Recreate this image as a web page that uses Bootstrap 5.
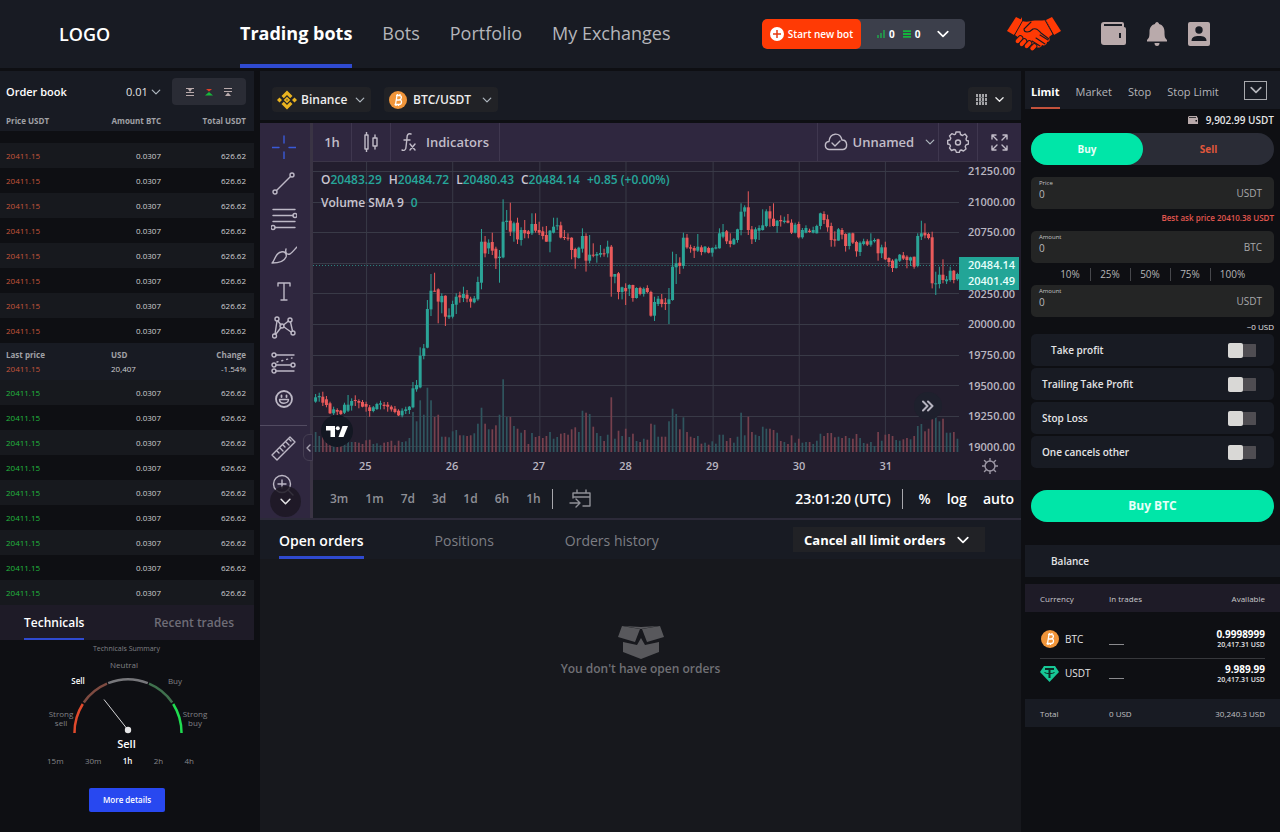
<!DOCTYPE html>
<html lang="en" data-bs-theme="dark">
<head>
<meta charset="utf-8">
<meta name="viewport" content="width=device-width, initial-scale=1">
<title>Trading bots</title>
<link href="https://cdn.jsdelivr.net/npm/bootstrap@5.3.0/dist/css/bootstrap.min.css" rel="stylesheet">
<style>
:root{--bar:#181b23;--page:#0e0f13;--chip:#212226;--violet:#2f273f;--line-v:#3f374f;--plot:#231e2e;--blue:#2f4ad0;--up:#26a69a;--mint:#00e6a8}
body{font-family:"Open Sans","Noto Sans",sans-serif;background:var(--page);color:#e4e4e6;font-size:11px;line-height:16px}
button{font:inherit;color:inherit}
a{color:inherit;text-decoration:none}
svg{display:block;flex:none}
.ic{fill:none;stroke:currentColor;stroke-width:1.4;stroke-linecap:round;stroke-linejoin:round}
.fw-semi{font-weight:600}
.plain{background:none;border:0;padding:0}
.shrinkable{min-width:0}

/* header */
.topbar{background:var(--bar);height:68px;margin-bottom:3px;padding-left:59px;padding-right:70px}
.brand{font-size:18px;font-weight:600;width:181px;color:#fff}
.mainnav{gap:30px;font-size:18px;color:#b4b5ba}
.mainnav a{display:flex;align-items:center;border-bottom:4px solid transparent;padding-top:2px}
.mainnav a.active{color:#fff;font-weight:700;border-color:var(--blue)}
.botbar{background:#3c3f4b;border-radius:5px;height:30px;overflow:hidden;width:203px}
.botbar .start{background:#ff3a05;color:#fff;font-size:10px;font-weight:600;border-radius:5px;width:99px;height:30px}
.counts{font-size:10px}
.tint{color:#b9aaab}
.hands{margin-left:42px;margin-right:40px}
.hicon{margin-left:21px}

/* page frame */
.frame{display:grid;grid-template-columns:254px minmax(0,1fr) 255px;min-height:761px}
.mid{background:#17181d;margin:0 4px 0 6px}

/* drop-downs */
.pick{width:auto;border:0;padding:0 20px 0 0;background-color:transparent;color:inherit;font:inherit;background-size:10px 10px;background-position:right 6px center;
--bs-form-select-bg-img:url("data:image/svg+xml,%3csvg xmlns='http://www.w3.org/2000/svg' viewBox='0 0 10 10'%3e%3cpath fill='none' stroke='%23ccc' stroke-width='1.4' d='M1 3l4 4 4-4'/%3e%3c/svg%3e")}
.pick option{color:#fff}
.pick-step{background-position:right 2px center;padding-right:15px;margin-right:9px}
.pick-ex{margin-left:4px;padding-right:23px}
.pick-pair{margin-left:6px;padding-right:26px}
.pick-name{margin-left:5px;padding-right:20px;flex:1;background-position:right 0 center}

/* order book */
.ob-head{background:var(--bar);height:60px}
.ob-title{height:41px;padding:0 8px 0 6px}
.ob-title h2{font-size:11px}
.modes{background:#2a2c35;border-radius:4px;height:27px;width:74px}
.book{width:100%;table-layout:fixed;font-size:8px;line-height:12px;border-collapse:collapse}
.book th{font-weight:700;color:#a0a1a6;padding:0;height:17px}
.book td{padding:0;height:25px;color:#cfcfd2}
.book .c1{width:110px}.book .c2{width:51px}
.book tr>:first-child{padding-left:6px}
.book tr>:last-child{padding-right:8px;text-align:right}
.book tr>:nth-child(2){text-align:right}
.book tbody tr:nth-child(odd){background:#17191e}
.asks{margin-top:12px}
.asks td:first-child,.last .red{color:#c5553b}
.bids td:first-child{color:#22b83f}
.last{background:var(--bar);height:37px;padding-top:5px}
.last .book td,.last .book th{height:14px}
.last .book tr>:nth-child(2){text-align:left;padding-left:1px}
.last .book tbody tr{background:none}
.tabs2{background:#1e1b27;height:35px;font-size:12px;font-weight:600;padding:0 20px 0 24px;color:#6f6d77}
.tabs2 button{border-bottom:2px solid transparent;padding-top:3px}
.tabs2 .active{color:#fff;border-color:var(--blue)}
.frames{font-size:8px;color:#85868a;margin:1px 60px 19px 47px}
.more{background:#2848f0;color:#fff;font-size:8px;font-weight:600;border:0;border-radius:2px;width:76px;height:24px}

/* chart */
.pairwrap{background:var(--page);padding-bottom:3px}
.pairbar{background:var(--bar);height:49px;padding:8px 9px 0 12px;gap:13px}
.chip{background:var(--chip);border-radius:4px;height:25px;color:#eee;font-size:12px}
.chip-l{padding-left:5px}
.chip-grid{width:44px}
.widget{background:var(--plot)}
.tools{width:50px;background:var(--violet);color:#bdb8c6;padding:6px 3px 0 0}
.tools button{height:36px;display:flex;align-items:center;justify-content:center}
.tools .cross{color:#3a5ad8}
.scroller{left:10px;bottom:1px;width:31px;height:31px;background:#1c1823d9}
.collapser{left:43px;bottom:57px;width:10px;height:27px;border:1px solid #453e52;background:var(--violet);color:#aaa5b3}
.rule{background:#3a3444;width:3px}
.c-head{background:var(--violet);height:39px;border-bottom:1px solid #3b3547;color:#c1bcc8;font-size:13px;font-weight:600}
.c-cell{border-right:1px solid var(--line-v);width:39px;display:flex;align-items:center;justify-content:center}
.c-ind{width:109px;gap:9px}
.c-name{width:122px;padding:0 6px 0 8px;border-left:1px solid var(--line-v)}
.c-full{width:43px;border:0}
.legend-line{font-size:12px;left:8px;top:10px;gap:7px;color:var(--up)}
.legend-vol{top:33px}
.legend-line b{font-weight:600;color:#c9c5d0}
.axis{font-size:11px;font-weight:600;color:#b9b5c0}
.axis-y{width:62px;height:294px;line-height:18px;padding-left:9px}
.axis-x{height:23px;padding:0 30px 0 9px;line-height:18px}
.tag{left:0;right:2px;top:95px;background:#22a597;color:#e7fffb;padding-left:9px;line-height:16px;height:33px}
.sun{color:#9a95a3;margin-top:2px}
.tvmark{left:8px;bottom:33px}
.latest{right:79px;bottom:60px;width:28px;height:28px;background:#1e202d;color:#b5b3bf}
.c-foot{background:var(--bar);height:38px;font-size:12px;font-weight:600;color:#8f9097;padding:0 7px 0 17px}
.spans{gap:17px}
.bar-v{width:1px;height:20px;background:#a8a8ad;margin:0 16px 0 11px}
.clock{font-size:14px}
.scales{gap:16px;font-size:14px}
.tabs3{background:var(--bar);height:41px;border-top:2px solid #2c2a39;font-size:14px;color:#7d7e84;padding:0 36px 0 19px;gap:71px}
.tabs3>button{border-bottom:3px solid transparent;padding-top:5px}
.tabs3 .active{color:#fff;font-weight:600;border-color:var(--blue)}
.tabs3 .cancel{background:var(--chip);width:192px;height:25px;color:#fff;font-weight:700;font-size:13px;border:0;padding:0 16px 0 11px;margin-top:7px}
.empty{padding-top:66px;color:#707075;font-size:12px;gap:2px}

/* order form */
.sidetabs{background:var(--bar);height:38px;padding:0 13px 0 6px;color:#b4b5ba;gap:16px}
.sidetabs .tb{border-bottom:2px solid transparent;height:38px;padding-top:6px}
.sidetabs .active{color:#fff;font-weight:700;border-color:#c4523c}
.box-dd{width:23px;height:19px;border:1px solid #a8a9ad}
.oform{padding:0 6px}
.funds{height:22px;margin-bottom:2px;font-size:10px}
.bs{background:#2a2c36;border-radius:16px;height:32px;font-weight:700;font-size:10px;margin-bottom:12px}
.bs button{height:32px;border-radius:16px}
.bs .buy{background:var(--mint);color:#e8fff8;width:112px}
.bs .sell{color:#e0573b}
.field{background:#242525;border-radius:5px;height:32px;padding:0 12px 0 8px;color:#a9a9ab;font-size:10px}
.field>div{padding-top:3px}
.field label{font-size:6px;line-height:7px;display:block;color:#c4c4c6}
.field input{background:none;border:0;outline:0;padding:0;color:#b9b9bb;width:100%;font-size:10px;line-height:12px;height:13px;display:block}
.note{font-size:8px;line-height:12px}
.note-ask{color:#e0564f;padding:3px 0;height:22px}
.note-sum{padding-top:4px;height:17px}
.pcts{height:22px;color:#b5b5b7;font-size:10px}
.pcts button{border-right:1px solid #47484c;width:40px;height:13px;line-height:13px}
.pcts button:last-child{border:0;width:44px}
.opt{background:var(--bar);height:32px;border-radius:5px;padding:0 18px 0 11px;margin-bottom:2px;font-weight:600;font-size:10px}
.opt-in{padding-left:9px}
.tgl{appearance:none;margin:0;width:28px;height:15px;position:relative;background:linear-gradient(#4f4d52,#4f4d52) center/28px 13px no-repeat;border-radius:2px}
.tgl::before{content:"";position:absolute;left:0;top:0;width:15px;height:15px;background:#d9d8d6;border-radius:2px}
.tgl:checked::before{left:13px}
.buybtn{background:var(--mint);color:#e8fff8;font-weight:700;font-size:12px;height:32px;border-radius:16px;margin-top:20px}
.bal-head{background:var(--bar);height:32px;padding-left:26px;margin:23px 0 7px;font-weight:600;font-size:10px}
.bal{width:100%;table-layout:fixed;font-size:8px;line-height:11px}
.bal th{background:#1e1b27;height:28px;font-weight:400;color:#c9c9cd}
.bal tfoot td{background:var(--bar);height:28px;color:#c0c0c4}
.bal .w1{width:83px}.bal .w2{width:56px}
.bal tr>:first-child{padding-left:15px}
.bal tr>:last-child{padding-right:15px;text-align:right}
.row-a{height:46px}.row-a td{padding-top:9px}
.row-b{height:41px;background:linear-gradient(#37383c,#37383c) 15px 0/225px 1px no-repeat}
.row-b td{padding-bottom:11px}
.coin{font-size:10px;gap:6px}
.coin svg{width:19px}
.amt{font-size:10px;font-weight:700;color:#fff;line-height:12px}
.sub{font-size:7px;font-weight:600;line-height:10px}
.dash{width:15px;height:1px;background:#8a8a8e;margin-top:10px}
</style>
</head>
<body>
<header class="topbar d-flex align-items-stretch">
  <a href="#" class="brand d-flex align-items-center">LOGO</a>
  <nav class="mainnav d-flex">
    <a href="#" class="active">Trading bots</a><a href="#">Bots</a><a href="#">Portfolio</a><a href="#">My Exchanges</a>
  </nav>
  <div class="d-flex align-items-center ms-auto">
    <div class="botbar d-flex align-items-center">
      <button class="start plain d-flex align-items-center justify-content-center gap-1">
        <svg width="14" height="14" viewBox="0 0 14 14"><circle cx="7" cy="7" r="7" fill="#fff"/><path d="M7 3v8M3 7h8" stroke="#e63a10" stroke-width="1.5"/></svg>
        <span>Start new bot</span>
      </button>
      <div class="counts d-flex align-items-center ms-3 flex-grow-1 fw-bold text-white">
        <svg width="8" height="8" viewBox="0 0 8 8" stroke="#1db14c" stroke-width="1.4"><path d="M1 8V5M4 8V3M7 8V0"/></svg>
        <span class="ms-1">0</span>
        <svg class="ms-2" width="8" height="8" viewBox="0 0 8 8" stroke="#14b53c" stroke-width="1.8"><path d="M0 1.2h8M0 4h8M0 6.8h8"/></svg>
        <span class="ms-1">0</span>
        <button class="plain ms-auto me-3" aria-label="More"><svg class="ic" width="12" height="12" viewBox="0 0 10 10"><path d="M1 3l4 4 4-4"/></svg></button>
      </div>
    </div>
    <svg class="hands" width="54" height="36" viewBox="0 0 54 36">
      <g fill="#ff3a05"><path d="M9 1l6 3-8 15-7-4z"/><path d="M45 1l-6 3 8 15 7-4z"/>
      <path d="M15 5c3 1 6 1 9 0 5-1 10 0 15-1l7 14-4 3c2 3 0 5-2 5 0 3-3 4-5 3-1 3-4 3-6 2-1 2-5 3-7-1l-14-11-1-3 8-15z"/></g>
      <path d="M16 4L7 20M38 4l9 16" stroke="#181b23" stroke-width="1"/>
      <path d="M24 6l-7 7c0 4 5 4 9 0 4-1 5 1 8 4l8 6M29 22l9 6M25 25l8 5M33 19l8 5" fill="none" stroke="#181b23" stroke-width="1.1" stroke-linecap="round"/>
      <g stroke="#181b23" stroke-width="1" fill="#ff3a05"><rect x="10" y="19" width="5" height="9" rx="2.5" transform="rotate(42 12 23)"/><rect x="14" y="22" width="5" height="9" rx="2.5" transform="rotate(42 16 26)"/><rect x="19" y="24" width="5" height="9" rx="2.5" transform="rotate(42 21 28)"/><rect x="24" y="27" width="5" height="8" rx="2.5" transform="rotate(42 26 31)"/></g>
    </svg>
    <button class="plain tint" aria-label="Wallet"><svg width="25" height="24" viewBox="0 0 25 24"><path fill="currentColor" fill-rule="evenodd" d="M3 0h18a2 2 0 0 1 2 2v3a2 2 0 0 1 2 2v14a2 2 0 0 1-2 2H3a3 3 0 0 1-3-3V3a3 3 0 0 1 3-3zM3 2v2h18V2zM18 11v5h2v-5z"/></svg></button>
    <button class="plain tint hicon" aria-label="Notifications"><svg width="20" height="24" viewBox="0 0 20 24"><path fill="currentColor" d="M10 0c1 0 2 1 2 2 4 1 5.500 4 5.500 8 0 5 .5 6 2.500 8v1.500H0V18c2-2 2.500-3 2.500-8 0-4 1.500-7 5.500-8 0-1 1-2 2-2zM7.500 21h5a2.500 3 0 0 1-5 0z"/></svg></button>
    <button class="plain tint hicon" aria-label="Account"><svg width="22" height="24" viewBox="0 0 22 24"><rect width="22" height="24" rx="2" fill="currentColor"/><circle cx="11" cy="8" r="3.700" fill="#181b23"/><path d="M3.500 19c0-4 3-5 7.500-5s7.500 1 7.500 5z" fill="#181b23"/></svg></button>
  </div>
</header>

<main class="frame">
  <!-- order book and technicals -->
  <section>
    <div class="ob-head">
      <div class="ob-title d-flex align-items-center">
        <h2 class="m-0 fw-semi text-white">Order book</h2>
        <select class="form-select pick pick-step ms-auto" aria-label="Precision"><option>0.01</option></select>
        <div class="modes d-flex align-items-center justify-content-around px-2">
          <button class="plain" aria-label="Both"><svg width="8" height="8" viewBox="0 0 8 8"><path d="M0 .5h8M0 4.500h8M0 7.500h8" stroke="#b9aaab"/><path d="M2 1h4L4 4z" fill="#b9aaab"/></svg></button>
          <button class="plain" aria-label="Split"><svg width="8" height="8" viewBox="0 0 8 8"><path d="M1 1h6L4 3.500z" fill="#e0402a"/><path d="M0 7.500h8L4 4z" fill="#17b83c"/></svg></button>
          <button class="plain" aria-label="Bids"><svg width="8" height="8" viewBox="0 0 8 8"><path d="M0 .5h8M0 3.500h8" stroke="#b9aaab"/><path d="M1 8h6L4 4.500z" fill="#b9aaab"/></svg></button>
        </div>
      </div>
      <table class="book"><colgroup><col class="c1"><col class="c2"><col></colgroup>
        <thead><tr><th>Price USDT</th><th>Amount BTC</th><th>Total USDT</th></tr></thead></table>
    </div>
    <table class="book asks"><colgroup><col class="c1"><col class="c2"><col></colgroup><tbody id="asks"></tbody></table>
    <div class="last"><table class="book"><colgroup><col class="c1"><col class="c2"><col></colgroup>
      <thead><tr><th>Last price</th><th>USD</th><th>Change</th></tr></thead>
      <tbody><tr><td class="red">20411.15</td><td>20,407</td><td>-1.54%</td></tr></tbody></table></div>
    <table class="book bids"><colgroup><col class="c1"><col class="c2"><col></colgroup><tbody id="bids"></tbody></table>
    <div class="tabs2 d-flex justify-content-between align-items-stretch">
      <button class="plain active">Technicals</button><button class="plain">Recent trades</button>
    </div>
    <svg width="100%" height="112" viewBox="0 0 254 112" font-size="8" fill="#808185" text-anchor="middle">
      <text x="126.500" y="11" font-size="7">Technicals Summary</text>
      <text x="124" y="28">Neutral</text><text x="78" y="44" fill="#fff" font-weight="600">Sell</text><text x="175" y="44">Buy</text>
      <text x="61" y="77">Strong</text><text x="61" y="86">sell</text><text x="195" y="77">Strong</text><text x="195" y="86">buy</text>
      <g fill="none" stroke-width="2.500"><path d="M74.500 93A53.500 53.500 0 0 1 82.800 64" stroke="#e04a2c"/><path d="M83.800 62.500A53.500 53.500 0 0 1 107 43.700" stroke="#7e4b41"/><path d="M108.200 43.200A53.500 53.500 0 0 1 147.800 43.200" stroke="#77777b"/><path d="M149 43.700A53.500 53.500 0 0 1 172.200 62.500" stroke="#40714e"/><path d="M173.200 64A53.500 53.500 0 0 1 181.500 93" stroke="#20dc50"/></g>
      <path d="M104 59.500L128 90" stroke="#d5d5d7"/><circle cx="128" cy="90" r="3.200" fill="#e6e6e8"/>
      <text x="126.500" y="108" fill="#fff" font-weight="600" font-size="11">Sell</text>
    </svg>
    <div class="frames d-flex justify-content-between"><button class="plain">15m</button><button class="plain">30m</button><button class="plain text-white fw-semi">1h</button><button class="plain">2h</button><button class="plain">4h</button></div>
    <div class="text-center"><button class="more">More details</button></div>
  </section>

  <!-- chart and orders -->
  <section class="mid">
    <div class="pairwrap">
    <div class="pairbar d-flex align-items-center">
      <div class="chip chip-l d-flex align-items-center fw-semi"><svg width="20" height="20" viewBox="0 0 20 20" fill="#e9b320"><path d="M10 .5l5.500 5.500-2.300 2.300L10 5 6.800 8.300 4.500 6zM10 19.500l5.500-5.500-2.300-2.300L10 15l-3.200-3.300L4.500 14zM2.500 7.500L5 10l-2.500 2.500L0 10zM17.500 7.500L20 10l-2.500 2.500L15 10z"/><path fill-rule="evenodd" d="M10 6.700l3.300 3.300-3.300 3.300L6.700 10zM10 9.200l-.8.8.8.8.8-.8z"/></svg>
        <select class="form-select pick pick-ex" aria-label="Exchange"><option>Binance</option></select></div>
      <div class="chip chip-l d-flex align-items-center fw-semi"><svg width="18" height="18" viewBox="0 0 18 18"><circle cx="9" cy="9" r="9" fill="#f0953a"/><path d="M7 4.500h3.500c2.500 0 2.500 3.800 0 4.200 3 .3 2.500 4.800-.5 4.800H5.500M8 4.500l-1.500 9M7 9h3.500M8.500 3v2M11 3v2M7 13v2M9.500 13v2" fill="none" stroke="#fff" stroke-width="1.300"/></svg>
        <select class="form-select pick pick-pair" aria-label="Pair"><option>BTC/USDT</option></select></div>
      <button class="chip chip-grid border-0 p-0 ms-auto d-flex align-items-center justify-content-center gap-2" aria-label="Layout"><svg width="11" height="11" viewBox="0 0 11 11"><path d="M0 0h2v11H0zM3 0h5v11H3zM9 0h2v11H9z" fill="#a5a5a8"/><path d="M0 3.500h2M0 7.500h2M9 3.500h2M9 7.500h2M5.500 0v11" stroke="#303136"/><path d="M3 3.500h5M3 7.500h5" stroke="#77787c"/></svg><svg class="ic" width="9" height="9" viewBox="0 0 10 10"><path d="M1 3l4 4 4-4"/></svg></button>
    </div>
    </div>
    <div class="widget d-flex position-relative">
      <div class="tools d-flex flex-column">
        <button class="plain cross" aria-label="Cross"><svg class="ic" width="24" height="24" viewBox="0 0 24 24"><path d="M12 1v7M12 17v7M0 12.500h7M17 12.500h7"/></svg></button>
        <button class="plain" aria-label="Trend line"><svg class="ic" width="24" height="24" viewBox="0 0 24 24"><circle cx="3" cy="21" r="2"/><circle cx="20" cy="4" r="2"/><path d="M4.500 19.500L18.500 5.500"/></svg></button>
        <button class="plain" aria-label="Fibonacci"><svg class="ic" width="26" height="24" viewBox="0 0 26 24"><path d="M2 2.500h22M2 8.500h20M2 14.500h22M4 20.500h20"/><circle cx="24" cy="8.500" r="2"/><circle cx="2" cy="20.500" r="2"/></svg></button>
        <button class="plain" aria-label="Brush"><svg class="ic" width="26" height="24" viewBox="0 0 26 24"><path d="M1 20c3-2 3-10 9-11 4-1 6 2 5 5-2 5-8 6-14 6zM15 6c-1 4 1 6 4 5 3-2 4-4 7-7"/></svg></button>
        <button class="plain" aria-label="Text"><svg class="ic" width="24" height="24" viewBox="0 0 24 24"><path d="M6 7V4h12v3M12 4v17M9 21h6"/></svg></button>
        <button class="plain" aria-label="Pattern"><svg class="ic" width="24" height="24" viewBox="0 0 24 24"><circle cx="5" cy="4" r="2"/><circle cx="18" cy="5" r="2"/><circle cx="10" cy="11" r="2"/><circle cx="2.500" cy="21" r="2"/><circle cx="21" cy="18" r="2"/><path d="M5 6L3 19M6 6l3 4M11.500 10l5-4M18.500 7l2 9M12 12l7 5M9 12.500L4 19"/></svg></button>
        <button class="plain" aria-label="Forecast"><svg class="ic" width="26" height="24" viewBox="0 0 26 24"><circle cx="3" cy="4" r="2"/><circle cx="3" cy="14" r="2"/><circle cx="3" cy="20" r="2"/><circle cx="22" cy="14" r="2"/><path d="M5 4h18M5 14h15M5 20h18"/><path d="M6 11L21 7" stroke-dasharray="1 4"/></svg></button>
        <button class="plain" aria-label="Emoji"><svg class="ic" width="20" height="20" viewBox="0 0 20 20"><circle cx="10" cy="10" r="8" stroke-width="1.800"/><path d="M5.500 10.500c0 5 9 5 9 0z"/><path d="M7.500 6.500v1.500M12.500 6.500v1.500" stroke-width="1.800"/></svg></button>
        <hr class="m-0 mt-2 mb-1">
        <button class="plain" aria-label="Measure"><svg class="ic" width="26" height="26" viewBox="0 0 26 26"><path d="M1 20L19 2l5 5L6 25zM6 16l2 2M9 13l3 3M12 10l2 2M15 7l3 3M18 4l2 2"/></svg></button>
        <button class="plain" aria-label="Zoom"><svg class="ic" width="24" height="24" viewBox="0 0 24 24"><circle cx="10" cy="12" r="8.500"/><path d="M10 8v8M6 12h8M16 18l5 5"/></svg></button>
      </div>
      <button class="plain scroller position-absolute rounded-circle d-flex justify-content-center align-items-center" aria-label="Scroll tools"><svg class="ic" width="11" height="11" viewBox="0 0 10 10"><path d="M1 3l4 4 4-4"/></svg></button>
      <button class="collapser position-absolute d-flex justify-content-center align-items-center rounded-start p-0" aria-label="Collapse"><svg class="ic" width="5" height="8" viewBox="0 0 5 8"><path d="M4 1L1 4l3 3"/></svg></button>
      <div class="rule"></div>
      <div class="flex-grow-1 shrinkable">
        <div class="c-head d-flex align-items-stretch">
          <button class="plain c-cell">1h</button>
          <button class="plain c-cell" aria-label="Candles"><svg class="ic" width="16" height="20" viewBox="0 0 16 20"><path d="M2 3h3v14H2zM3.500 0v3M3.500 17v3M10 6h4v8h-4zM12 3v3M12 14v3"/></svg></button>
          <button class="plain c-cell c-ind"><svg class="ic" width="16" height="18" viewBox="0 0 16 18"><path d="M10 1C7 0 6 2 6 5l-1 9c0 3-2 4-4 3M3 7h6M9 11l5 6M14 11l-5 6"/></svg>Indicators</button>
          <div class="c-cell c-name ms-auto"><svg class="ic" width="24" height="18" viewBox="0 0 24 18"><path d="M6 16.500C0 17 0 9 5 8.500 6-1 16-1 18 7c6 0 6 9 1 9.500zM8 10l3 3 5-5"/></svg>
            <select class="form-select pick pick-name" aria-label="Layout name"><option>Unnamed</option></select></div>
          <button class="plain c-cell" aria-label="Settings"><svg class="ic" width="22" height="22" viewBox="0 0 22 22"><path d="M9 1h4l.5 2.500 2 1L18 3l2 2.500-1 2.500.5 1.500 2 .5v3l-2.500.8-.8 1.700L19 18l-2.500 2-2.300-1-1.200.5-.7 2H9.500L8.500 19l-1.500-.5-2.500 1L2.500 17l1-2-.8-1.500-2-.5v-3.500L3 9l.8-1.800L2.500 5l2.300-2.300L7.200 3.700l1.300-.5z"/><circle cx="11" cy="11.500" r="2.500"/></svg></button>
          <button class="plain c-cell c-full" aria-label="Fullscreen"><svg class="ic" width="17" height="17" viewBox="0 0 17 17"><path d="M1 5V1h4M1 1l5 5M12 1h4v4M16 1l-5 5M1 12v4h4M1 16l5-5M16 12v4h-4M16 16l-5-5"/></svg></button>
        </div>
        <div class="d-flex position-relative">
          <div class="flex-grow-1 shrinkable">
            <svg id="plot" width="100%" height="295" viewBox="0 0 645 295" preserveAspectRatio="none"></svg>
            <div class="axis axis-x d-flex text-center"><span class="flex-fill">25</span><span class="flex-fill">26</span><span class="flex-fill">27</span><span class="flex-fill">28</span><span class="flex-fill">29</span><span class="flex-fill">30</span><span class="flex-fill">31</span></div>
          </div>
          <div class="position-relative">
            <div class="axis axis-y d-flex flex-column justify-content-between"><span>21250.00</span><span>21000.00</span><span>20750.00</span><span>&nbsp;</span><span>20250.00</span><span>20000.00</span><span>19750.00</span><span>19500.00</span><span>19250.00</span><span>19000.00</span></div>
            <div class="axis tag position-absolute"><div>20484.14</div><div>20401.49</div></div>
            <svg class="ic sun mx-auto" width="16" height="16" viewBox="0 0 16 16"><circle cx="8" cy="8" r="5"/><path d="M8 0v3M8 13v3M0 8h3M13 8h3M2.500 2.500l2 2M11.500 11.500l2 2M13.500 2.500l-2 2M4.500 11.500l-2 2"/></svg>
          </div>
          <div class="legend-line position-absolute d-flex pe-none fw-semi"><span><b>O</b>20483.29</span><span><b>H</b>20484.72</span><span><b>L</b>20480.43</span><span><b>C</b>20484.14</span><span>+0.85 (+0.00%)</span></div>
          <div class="legend-line legend-vol position-absolute d-flex pe-none fw-semi"><b>Volume SMA 9</b><span>0</span></div>
          <svg class="tvmark position-absolute" width="32" height="32" viewBox="0 0 32 32"><circle cx="16" cy="16" r="16" fill="#131722"/><path d="M5 11h9v11h-4.500v-6.500H5z" fill="#fff"/><circle cx="16.800" cy="13.200" r="2" fill="#fff"/><path d="M21.500 11H27l-4.500 11h-5z" fill="#fff"/></svg>
          <button class="plain latest position-absolute rounded-circle d-flex align-items-center justify-content-center" aria-label="Latest"><svg class="ic" width="12" height="12" viewBox="0 0 12 12"><path stroke-width="2" d="M1 1.500L5.500 6 1 10.500M6 1.500L10.500 6 6 10.500"/></svg></button>
        </div>
        <div class="c-foot d-flex align-items-center">
          <div class="spans d-flex"><button class="plain">3m</button><button class="plain">1m</button><button class="plain">7d</button><button class="plain">3d</button><button class="plain">1d</button><button class="plain">6h</button><button class="plain">1h</button></div>
          <div class="bar-v"></div>
          <button class="plain" aria-label="Go to date"><svg class="ic" width="22" height="20" viewBox="0 0 22 20"><path d="M4 9V4h17v13h-7M8 1v3M17 1v3M4 8h17M1 14h9M7 10l4 4-4 4"/></svg></button>
          <span class="clock ms-auto text-white">23:01:20 (UTC)</span>
          <div class="bar-v"></div>
          <div class="scales d-flex text-white"><button class="plain">%</button><button class="plain">log</button><button class="plain">auto</button></div>
        </div>
      </div>
    </div>
    <div class="tabs3 d-flex align-items-stretch">
      <button class="plain active">Open orders</button><button class="plain">Positions</button><button class="plain">Orders history</button>
      <button class="cancel ms-auto d-flex align-items-center justify-content-between"><span>Cancel all limit orders</span><svg class="ic" width="12" height="12" viewBox="0 0 10 10"><path d="M1 3l4 4 4-4"/></svg></button>
    </div>
    <div class="empty d-flex flex-column align-items-center fw-semi">
      <svg width="46" height="34" viewBox="0 0 46 34" fill="#58585c"><path d="M5 17l14 3 4-7 4 7 14-3v10l-18 7-18-7z"/><path d="M4 1l18 3-5 13L0 12zM42 1L24 4l5 13 17-5z"/><path d="M6 1l17 3 17-3-17 1z"/></svg>
      <span>You don't have open orders</span>
    </div>
  </section>

  <!-- order form and balance -->
  <section>
    <div class="sidetabs d-flex align-items-stretch">
      <button class="plain tb active">Limit</button><button class="plain tb">Market</button><button class="plain tb">Stop</button><button class="plain tb">Stop Limit</button>
      <button class="box-dd bg-transparent p-0 ms-auto align-self-center d-flex align-items-center justify-content-center" aria-label="More order types"><svg class="ic" width="12" height="12" viewBox="0 0 10 10"><path d="M1 3l4 4 4-4"/></svg></button>
    </div>
    <div class="oform">
      <div class="funds d-flex justify-content-end align-items-center gap-2 fw-semi"><svg class="tint" width="10" height="8" viewBox="0 0 10 8"><path fill="currentColor" fill-rule="evenodd" d="M1 0h8v1.500h1V8H0V1zM1 1v.8h7V1zM7.500 4v1.500H9V4z"/></svg>9,902.99 USDT</div>
      <div class="bs d-flex"><button class="plain buy">Buy</button><button class="plain sell flex-grow-1">Sell</button></div>
      <div class="field d-flex align-items-center"><div class="flex-grow-1 align-self-start"><label for="price">Price</label><input id="price" value="0"></div><span>USDT</span></div>
      <div class="note note-ask text-end fw-semi">Best ask price 20410.38 USDT</div>
      <div class="field d-flex align-items-center"><div class="flex-grow-1 align-self-start"><label for="amt1">Amount</label><input id="amt1" value="0"></div><span>BTC</span></div>
      <div class="pcts d-flex align-items-center justify-content-center"><button class="plain">10%</button><button class="plain">25%</button><button class="plain">50%</button><button class="plain">75%</button><button class="plain">100%</button></div>
      <div class="field d-flex align-items-center"><div class="flex-grow-1 align-self-start"><label for="amt2">Amount</label><input id="amt2" value="0"></div><span>USDT</span></div>
      <div class="note note-sum text-end">~0 USD</div>
      <div class="opt d-flex align-items-center justify-content-between"><label for="t1" class="opt-in">Take profit</label><input class="tgl" type="checkbox" id="t1"></div>
      <div class="opt d-flex align-items-center justify-content-between"><label for="t2">Trailing Take Profit</label><input class="tgl" type="checkbox" id="t2"></div>
      <div class="opt d-flex align-items-center justify-content-between"><label for="t3">Stop Loss</label><input class="tgl" type="checkbox" id="t3"></div>
      <div class="opt d-flex align-items-center justify-content-between"><label for="t4">One cancels other</label><input class="tgl" type="checkbox" id="t4"></div>
      <button class="plain buybtn w-100">Buy BTC</button>
    </div>
    <div class="bal-head d-flex align-items-center">Balance</div>
    <table class="bal"><colgroup><col class="w1"><col class="w2"><col></colgroup>
      <thead><tr><th>Currency</th><th>In trades</th><th>Available</th></tr></thead>
      <tbody>
        <tr class="row-a"><td><div class="coin d-flex align-items-center"><svg width="19" height="18" viewBox="-1 0 19 18"><circle cx="9" cy="9" r="9" fill="#f0953a"/><path d="M7 4.500h3.500c2.500 0 2.500 3.800 0 4.200 3 .3 2.500 4.800-.5 4.800H5.500M8 4.500l-1.500 9M7 9h3.500M8.500 3v2M11 3v2M7 13v2M9.500 13v2" fill="none" stroke="#fff" stroke-width="1.300"/></svg>BTC</div></td><td><div class="dash"></div></td><td><div class="amt">0.9998999</div><div class="sub">20,417.31 USD</div></td></tr>
        <tr class="row-b"><td><div class="coin d-flex align-items-center"><svg width="19" height="16" viewBox="0 0 19 16"><path d="M4 0h11l4 6-9.500 10L0 6z" fill="#17c796"/><path d="M5 3h9M9.500 3v9" stroke="#0e2a24" stroke-width="2" fill="none"/><path d="M4.500 6.500c2 1.500 8 1.500 10 0" stroke="#0e2a24" fill="none"/></svg>USDT</div></td><td><div class="dash"></div></td><td><div class="amt">9.989.99</div><div class="sub">20,417.31 USD</div></td></tr>
      </tbody>
      <tfoot><tr><td>Total</td><td>0 USD</td><td>30,240.3 USD</td></tr></tfoot>
    </table>
  </section>
</main>
<script>
const row='<tr><td>20411.15</td><td>0.0307</td><td>626.62</td></tr>';
document.getElementById('asks').innerHTML=row.repeat(8);
document.getElementById('bids').innerHTML=row.repeat(9);

// Hourly candles: direction, body top, body bottom, wick top, wick bottom, volume.
// Each block counts in thirds of a plot unit from its own base line.
const blocks=[
[414,`u292,305,282,308,60 u288,292,278,305,48 d290,308,275,318,50 d298,315,288,322,45 d310,340,305,342,42 u328,340,320,345,60 d330,335,325,345,35 d332,342,330,345,28 u314,338,308,342,32 u314,332,285,336,30 u303,317,295,332,30 d300,303,286,318,30 d303,308,298,325,28 d306,320,300,322,24 d312,320,305,335,35 d322,333,315,350,37 u322,333,318,337,24 u312,327,308,330,26 u310,314,302,328,20 d314,318,306,328,28 d314,320,306,335,30 d320,328,316,335,34 d326,336,318,340,20 d332,346,328,348,34 u332,346,325,352,30 u328,333,320,342,32 u320,330,318,342,42 u265,322,246,325,120 u255,268,240,275,92 u167,262,142,265,155 u145,168,132,178,112`],
[-276,`u717,833,690,835,193 u662,718,612,738,155 d662,664,608,665,105 d658,695,655,760,112 u678,697,670,730,46 d677,740,676,768,46 u736,742,715,747,44 u702,740,692,745,62 u680,704,670,732,66 d676,682,665,698,50 u672,684,650,696,50 d674,686,660,697,48 d686,695,680,713,50 u685,697,678,700,56 u636,688,620,692,85 u515,638,477,658,133 d515,550,498,562,85 u518,535,508,552,68 d516,542,488,555,68 d536,565,530,597,80 u560,564,540,638,112 u455,562,388,565,218 u452,456,420,480,105 d452,485,398,498,105`],
[24,`u160,185,155,215,78 d158,208,143,222,70 u180,210,172,227,58 d180,190,150,205,66 d184,192,180,205,24 u162,190,130,195,57 d162,182,130,188,45 d180,188,155,195,48 d184,198,170,208,42 d195,215,168,215,48 u182,215,180,247,60 u170,188,143,190,40 u166,169,143,180,45 d166,203,155,205,55 d201,204,180,210,57 d203,206,190,212,52 d203,240,202,268,68 d237,262,233,296,74 u233,264,230,266,60 u198,236,175,248,124 d198,272,190,305,118 u254,272,195,280,114 d254,257,220,262,76 u252,257,246,278,57 u249,254,225,262,48 d250,253,236,260,33 u230,250,212,262,52 d230,320,225,380,164 u312,320,312,340,40 d310,366,306,388,64 u352,366,350,388,48 d354,364,340,405,70 u345,356,343,378,45 d345,384,344,395,55 u354,384,352,386,33 d354,372,350,376,30 u356,372,352,380,40 d354,366,346,370,37 d366,437,362,440,85 u396,437,380,453,82 u386,402,378,408,46 d388,402,372,412,46 d398,402,384,420,46 u388,402,354,462,92 u290,390,245,392,130 u280,292,252,342,114 d278,288,262,312,68 u203,288,188,296,104 d203,232,192,236,60 d232,236,224,248,46 d234,242,228,264,42 u230,242,192,246,48 d232,246,226,256,25 u230,246,228,250,28 d234,248,230,250,22 u234,248,232,260,32 u232,236,224,238,25 u190,235,175,236,52 u186,200,162,205,52 d184,214,180,222,33 d212,222,190,232,42 u208,223,204,225,28 u178,210,176,218,46 u125,180,100,196,118 u112,125,106,140,50 d112,180,64,195,106 d178,208,168,222,60 u178,208,172,216,52`],
[-276,`u474,482,466,510,48 u466,480,418,482,76 u424,468,418,472,70 d424,446,408,470,70 d446,468,400,470,66 u452,468,450,488,58 d450,454,436,470,33 u452,456,440,460,30 d452,458,432,460,24 d458,488,448,492,50 u464,488,458,490,28 d462,502,455,505,40 u480,502,474,506,28 u474,488,466,490,30 d482,486,476,488,30 u480,488,470,490,24 u468,490,464,490,34 u430,468,428,478,55 d432,450,424,462,48 d448,472,434,485,57 d468,510,458,530,57 d508,512,484,530,44 u478,512,474,512,46 d480,494,474,508,42 d492,528,490,545,48 u490,528,488,538,42 d490,518,488,522,40 d516,544,512,560,54 u518,546,514,558,42 u514,522,506,526,27 d514,524,508,528,25 u512,524,490,530,30 u510,514,505,518,18 d508,550,506,572,60 u532,550,524,564,34 d532,568,515,570,52 d564,576,562,590,54 d572,594,568,606,48 u568,594,565,596,36 u554,572,552,576,34 d556,566,546,570,38 d560,570,556,595,42 u562,572,560,588,38 d560,590,560,596,48 u498,588,490,592,78 u490,500,452,510,84 d488,496,460,505,62 d492,504,488,508,70 d502,640,485,655,100 u640,643,605,675,104 u614,642,590,655,92 d614,630,568,640,100 u628,634,618,642,58 u602,630,590,635,58 d602,630,600,640,60 u612,628,608,632,40`]];
let s='';
for(let i=0;i<7;i++)s+=`<rect x="${Math.round(53+i*86.4)}" width="1" height="290" fill="#393a47"/>`;
for(let i=0;i<10;i++)s+=`<rect y="${Math.round(9+i*30.6)}" width="645" height="1" fill="#393a47"/>`;
s+='<path d="M0 103.500H645" stroke="#2d8580" stroke-dasharray="1 2"/>';
let n=0,vol='',can='';
for(const [base,txt] of blocks)for(const b of txt.split(' ')){
  const up=b[0]==='u',[t,o,h,l,v]=b.slice(1).split(',').map(Number),x=2.6+n*3.6,c=up?'#2ba497':'#ea5a5b',y=k=>(k+base)/3;
  vol+=`<rect x="${(x-.8).toFixed(1)}" y="${(290-v/3).toFixed(1)}" width="1.7" height="${(v/3).toFixed(1)}" fill="${up?'#2f555e':'#76404d'}"/>`;
  can+=`<rect x="${(x-.5).toFixed(1)}" y="${y(h).toFixed(1)}" width="1" height="${((l-h)/3).toFixed(1)}" fill="${c}"/><rect x="${(x-1.5).toFixed(1)}" y="${y(t).toFixed(1)}" width="3" height="${Math.max(1,(o-t)/3).toFixed(1)}" fill="${c}"/>`;
  n++;
}
document.getElementById('plot').innerHTML=s+vol+can;
</script>
<script src="https://cdn.jsdelivr.net/npm/bootstrap@5.3.0/dist/js/bootstrap.bundle.min.js"></script>
</body>
</html>
